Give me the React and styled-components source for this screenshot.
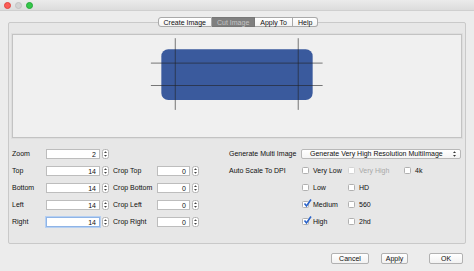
import styled, { createGlobalStyle } from 'styled-components';

const GlobalStyle = createGlobalStyle`
  html, body { margin: 0; padding: 0; background: #ececec; }
  body { font-family: "Liberation Sans", Arial, sans-serif; font-size: 7px; color: #0f0f0f; }
  * { box-sizing: border-box; }
`;

const Spinner = () => (
  <SpinBox>
    <svg width="7" height="10" viewBox="0 0 7 10">
      <rect x="0.5" y="0.5" width="6" height="9" rx="2" fill="#fff" stroke="#b4b4b4" />
      <path d="M2 4 L3.5 2.3 L5 4 Z" fill="#444" />
      <path d="M2 6 L3.5 7.7 L5 6 Z" fill="#444" />
    </svg>
  </SpinBox>
);

const NumField = ({ value, width = 54, focused }) => (
  <>
    <Input width={width} focused={focused}>{value}</Input>
    <Spinner />
  </>
);

const Check = ({ checked, disabled, label }) => (
  <CheckItem disabled={disabled}>
    <Box disabled={disabled}>
      {checked && (
        <svg width="9" height="9" viewBox="0 0 9 9">
          <path d="M1.5 4.5 L3.5 7 L8 0.5" fill="none" stroke="#2a63c9" strokeWidth="1.6" />
        </svg>
      )}
    </Box>
    <span>{label}</span>
  </CheckItem>
);

const leftRows = [
  { label: 'Top', crop: 'Crop Top' },
  { label: 'Bottom', crop: 'Crop Bottom' },
  { label: 'Left', crop: 'Crop Left' },
  { label: 'Right', crop: 'Crop Right', focused: true },
];

const dpiRows = [
  [{ label: 'Very Low' }, { label: 'Very High', disabled: true }, { label: '4k' }],
  [{ label: 'Low' }, { label: 'HD' }],
  [{ label: 'Medium', checked: true }, { label: '560' }],
  [{ label: 'High', checked: true }, { label: '2hd' }],
];

export default function App() {
  return (
    <>
      <GlobalStyle />
      <Window>
        <TitleBar>
          <Light color="#fc5c57" border="#e0443e" />
          <Light color="#d3d3d3" border="#c2c2c2" />
          <Light color="#35c84a" border="#25a838" />
        </TitleBar>
        <Body>
          <Tabs>
            <Tab>Create Image</Tab>
            <Tab active>Cut Image</Tab>
            <Tab>Apply To</Tab>
            <Tab last>Help</Tab>
          </Tabs>
          <Panel>
            <Preview>
              <svg width="450" height="104" viewBox="0 0 450 104">
                <rect x="149" y="14" width="152" height="51" rx="7" fill="#3a5a9d" />
                <line x1="163" y1="3" x2="163" y2="75" stroke="#222" strokeOpacity="0.75" strokeWidth="0.8" />
                <line x1="286.5" y1="3" x2="286.5" y2="75" stroke="#222" strokeOpacity="0.75" strokeWidth="0.8" />
                <line x1="138.5" y1="28" x2="311" y2="28" stroke="#222" strokeOpacity="0.75" strokeWidth="0.8" />
                <line x1="138.5" y1="50.5" x2="311" y2="50.5" stroke="#222" strokeOpacity="0.75" strokeWidth="0.8" />
              </svg>
            </Preview>
            <Form>
              <LeftCol>
                <Row>
                  <Label>Zoom</Label>
                  <NumField value="2" />
                </Row>
                {leftRows.map((r) => (
                  <Row key={r.label}>
                    <Label>{r.label}</Label>
                    <NumField value="14" focused={r.focused} />
                    <CropLabel>{r.crop}</CropLabel>
                    <NumField value="0" width={33} />
                  </Row>
                ))}
              </LeftCol>
              <RightCol>
                <Row>
                  <RightLabel>Generate Multi Image</RightLabel>
                  <Select>
                    <span>Generate Very High Resolution MultiImage</span>
                    <svg width="5" height="8" viewBox="0 0 5 8">
                      <path d="M1 3 L2.5 1.3 L4 3 Z" fill="#333" />
                      <path d="M1 5 L2.5 6.7 L4 5 Z" fill="#333" />
                    </svg>
                  </Select>
                </Row>
                {dpiRows.map((items, i) => (
                  <Row key={i}>
                    <RightLabel>{i === 0 ? 'Auto Scale To DPI' : ''}</RightLabel>
                    <DpiGrid>
                      {items.map((it) => (
                        <Check key={it.label} {...it} />
                      ))}
                    </DpiGrid>
                  </Row>
                ))}
              </RightCol>
            </Form>
          </Panel>
          <Footer>
            <Button width={38}>Cancel</Button>
            <Button width={27}>Apply</Button>
            <Button width={34} gap={21}>OK</Button>
          </Footer>
        </Body>
      </Window>
    </>
  );
}

const Window = styled.div`
  width: 474px;
  height: 271px;
  background: #ececec;
  overflow: hidden;
`;

const TitleBar = styled.div`
  height: 11px;
  display: flex;
  align-items: center;
  gap: 4px;
  padding: 1px 0 0 4px;
  background: linear-gradient(#ebebeb, #dcdcdc);
  border-bottom: 1px solid #cfcfcf;
`;

const Light = styled.div`
  width: 7px;
  height: 7px;
  border-radius: 50%;
  background: ${(p) => p.color};
  border: 0.5px solid ${(p) => p.border};
`;

const Body = styled.div`
  padding: 6px 8px 0;
`;

const Tabs = styled.div`
  display: flex;
  justify-content: center;
  margin-bottom: -5px;
  position: relative;
  z-index: 1;
  padding-left: 2px;
`;

const Tab = styled.div`
  height: 10px;
  line-height: 9px;
  padding: 0 5px;
  background: ${(p) => (p.active ? '#7f7f7f' : 'linear-gradient(#ffffff, #f3f3f3)')};
  color: ${(p) => (p.active ? '#c4c4c4' : '#0f0f0f')};
  border: 1px solid ${(p) => (p.active ? '#777' : '#a9a9a9')};
  border-left: none;
  &:first-child {
    border-left: 1px solid #a9a9a9;
    border-radius: 3px 0 0 3px;
  }
  ${(p) => p.last && 'border-radius: 0 3px 3px 0;'}
`;

const Panel = styled.div`
  width: 458px;
  height: 222px;
  border: 1px solid #c9c9c9;
  border-radius: 2px;
  background: #e7e7e7;
  padding: 11px 3px 0;
`;

const Preview = styled.div`
  height: 104px;
  background: #f0f0f0;
  border: 1px solid #c3c3c3;
  box-shadow: 0 0 0 1px #dedede;
  display: flex;
  svg { display: block; }
`;

const Form = styled.div`
  display: flex;
  padding-top: 10px;
`;

const LeftCol = styled.div`
  display: flex;
  flex-direction: column;
  gap: 6px;
  width: 217px;
`;

const RightCol = styled.div`
  display: flex;
  flex-direction: column;
  gap: 6px;
`;

const Row = styled.div`
  display: flex;
  align-items: center;
  height: 11px;
`;

const Label = styled.div`
  width: 34px;
`;

const CropLabel = styled.div`
  width: 44px;
  margin-left: 4px;
`;

const RightLabel = styled.div`
  width: 72px;
  white-space: nowrap;
`;

const Input = styled.div`
  width: ${(p) => p.width}px;
  height: 10px;
  line-height: 9px;
  background: #fff;
  border: 1px solid ${(p) => (p.focused ? '#8fb4e6' : '#bdbdbd')};
  box-shadow: ${(p) => (p.focused ? '0 0 0 1px #b6d0f2' : 'none')};
  text-align: right;
  padding-right: 3px;
`;

const SpinBox = styled.div`
  width: 7px;
  height: 10px;
  margin-left: 2px;
  svg { display: block; }
`;

const Select = styled.div`
  width: 160px;
  height: 10px;
  background: linear-gradient(#ffffff, #f4f4f4);
  border: 1px solid #b8b8b8;
  border-radius: 2px;
  display: flex;
  align-items: center;
  justify-content: space-between;
  padding: 0 3px 0 8px;
  white-space: nowrap;
`;

const DpiGrid = styled.div`
  display: grid;
  grid-template-columns: 46px 56px auto;
  margin-left: 1px;
`;

const CheckItem = styled.div`
  display: flex;
  align-items: center;
  gap: 4px;
  color: ${(p) => (p.disabled ? '#a8a8a8' : '#0f0f0f')};
`;

const Box = styled.div`
  width: 7px;
  height: 7px;
  background: #fff;
  border: 1px solid ${(p) => (p.disabled ? '#d4d4d4' : '#b0b0b0')};
  border-radius: 1.5px;
  position: relative;
  svg { position: absolute; left: 0; top: -3px; }
`;

const Footer = styled.div`
  display: flex;
  justify-content: flex-end;
  gap: 12px;
  padding: 9px 3px 0 0;
`;

const Button = styled.div`
  width: ${(p) => p.width}px;
  height: 11px;
  line-height: 9px;
  text-align: center;
  background: linear-gradient(#ffffff, #f2f2f2);
  border: 1px solid #b1b1b1;
  border-radius: 2px;
  ${(p) => p.gap && `margin-left: ${p.gap - 12}px;`}
`;
